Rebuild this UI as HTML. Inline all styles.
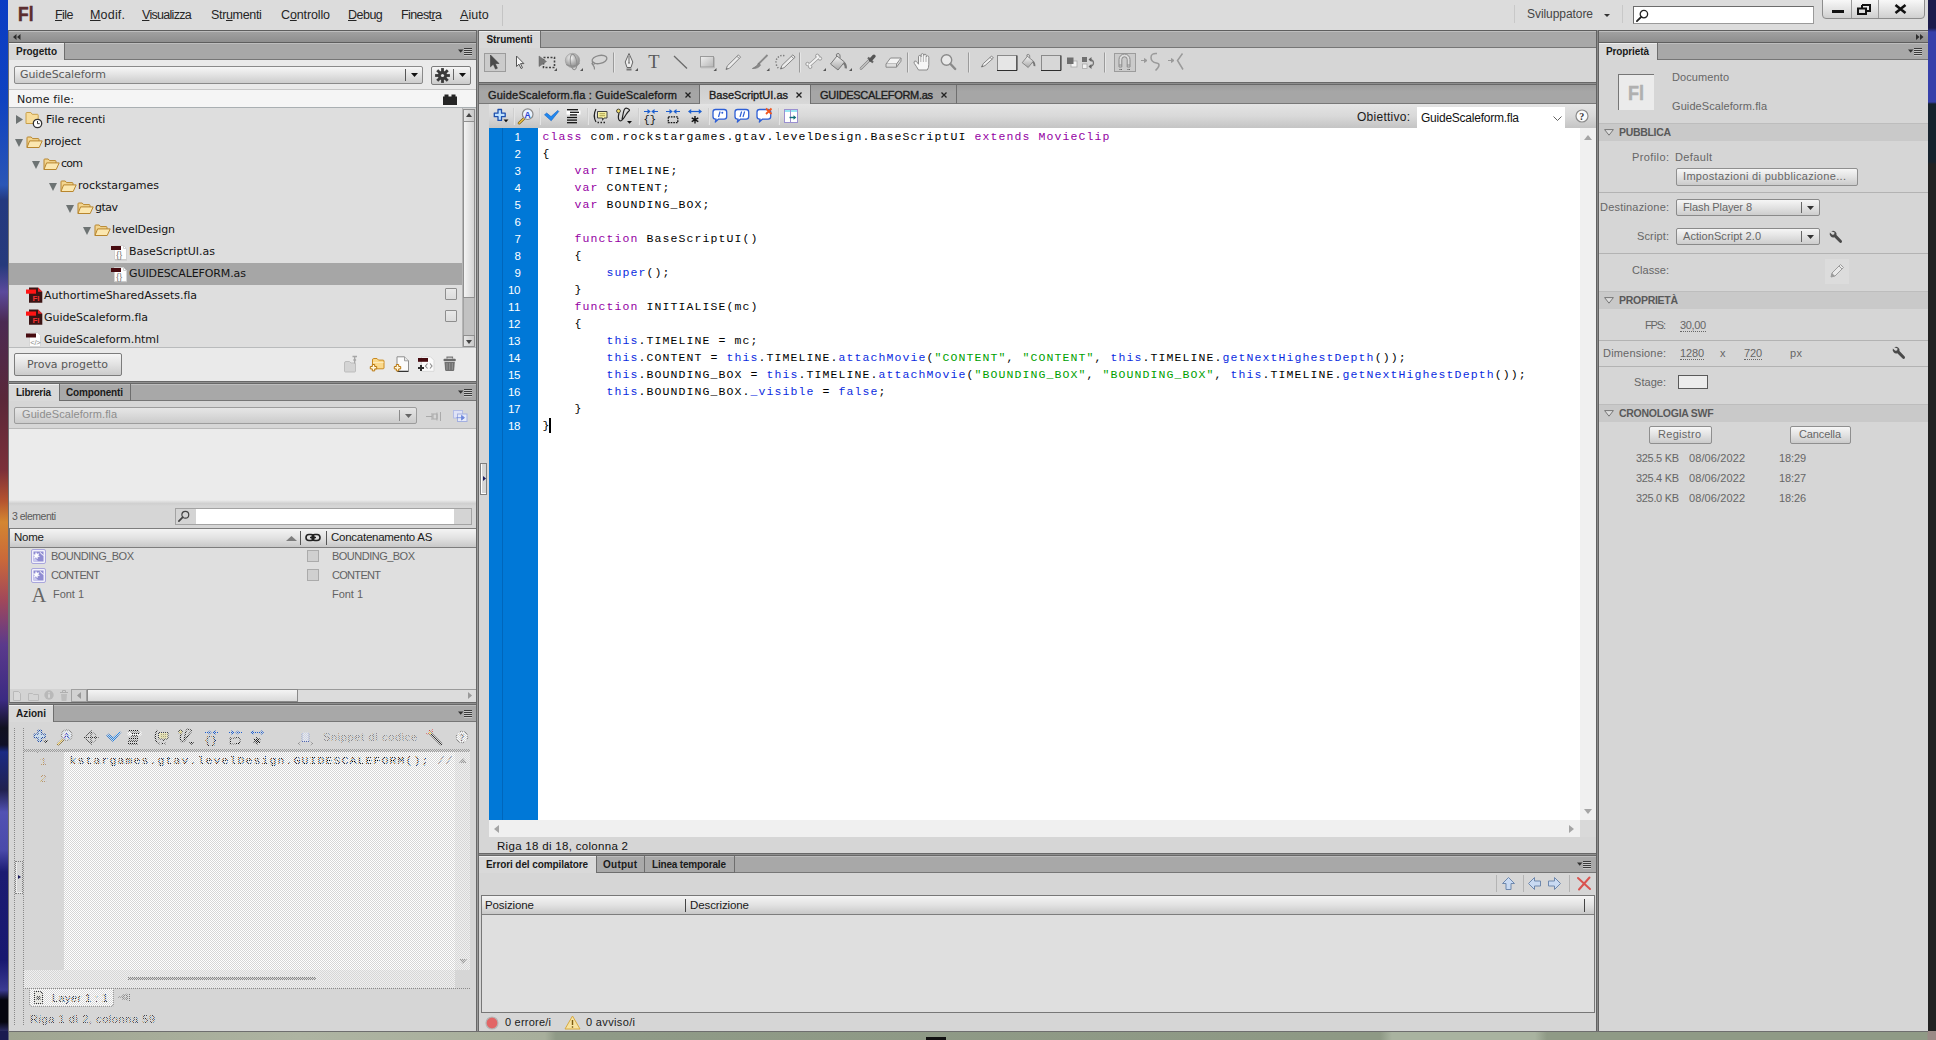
<!DOCTYPE html>
<html lang="it"><head><meta charset="utf-8"><title>Flash</title>
<style>
*{box-sizing:border-box;margin:0;padding:0}
html,body{width:1936px;height:1040px;overflow:hidden}
body{position:relative;background:#d6d6d6;font-family:"Liberation Sans",sans-serif;font-size:11px;color:#1e1e1e;line-height:1}
#root,#root *{position:absolute}
#root{left:0;top:0;width:1936px;height:1040px;overflow:hidden}
#root u{position:static;text-decoration:underline;text-underline-offset:1px}
#root span{position:static}
.tabbar{background:#a8a8a8;border-bottom:1px solid #767676;box-shadow:inset 0 1px 0 #bdbdbd}
.tab{background:#d9d9d9;border-right:1px solid #6e6e6e;box-shadow:inset 0 1px 0 #efefef}
.tabi{background:#a9a9a9;border-right:1px solid #6e6e6e;border-bottom:1px solid #6e6e6e;box-shadow:inset 0 1px 0 #bdbdbd}
.cbar{background:linear-gradient(#a2a2a2,#8e8e8e);border-top:1px solid #5e5e5e;border-bottom:1px solid #5e5e5e;box-shadow:inset 0 1px 0 #bdbdbd}
.btn{background:linear-gradient(#f6f6f6,#e2e2e2 50%,#cbcbcb);border:1px solid #7c7c7c;border-radius:2px}
.combo{background:linear-gradient(#f6f6f6 0,#e4e4e4 45%,#cdcdcd 100%);border:1px solid #8a8a8a;border-radius:2px}
.hd{background:linear-gradient(#f4f4f4,#e2e2e2 50%,#c8c8c8);border-top:1px solid #7d7d7d;border-bottom:1px solid #7d7d7d}
.sep{background:linear-gradient(#686868 0,#686868 1px,#8e8e8e 1px,#8e8e8e 2px,#686868 2px,#686868 3px)}
.sec{background:#c9c9c9}
svg{overflow:visible}
</style></head><body><div id="root">
<div id="wl" style="left:0;top:0;width:8px;height:1040px;background:linear-gradient(#0a3cc4 0,#0f42c0 100px,#2a56b6 185px,#24397f 200px,#263a7c 265px,#5b4a9c 292px,#4b2a52 322px,#5a2839 400px,#7b3039 470px,#b35230 500px,#d48631 522px,#c9683a 560px,#a1485a 600px,#5b3a8c 645px,#3b2a82 700px,#11111f 728px,#0f1028 745px,#1a2a84 752px,#21214f 790px,#5252b3 812px,#4a4aaa 850px,#1b1b72 872px,#181870 960px,#3b3b92 990px,#05050f 1000px,#05050f 1022px,#2b2b62 1031px)"></div>
<div id="wr" style="left:1928px;top:0;width:8px;height:1040px;background:linear-gradient(#1b1b4c 0,#1b1b4c 28px,#3640aa 32px,#3640aa 102px,#16222d 104px,#16222d 162px,#222 164px,#222 100%)"></div>
<div id="wb" style="left:0;top:1031px;width:1936px;height:9px;background:linear-gradient(90deg,#1a1a50 0,#1a1a50 8px,#9fa591 9px,#aeb4a2 300px,#a8af9c 545px,#8f9a87 556px,#8e9985 1380px,#a9b3a0 1392px,#a9b3a0 1535px,#8f9a86 1547px,#8f9a86 1927px,#9a8a86 1928px)"><div style="left:8px;top:0;width:1920px;height:1px;background:#6e6e6e"></div><div style="left:926px;top:6px;width:20px;height:3px;background:#111"></div></div>
<div style="left:8px;top:0px;width:1920px;height:30px;background:#dcdcdc"></div><div style="left:8px;top:30px;width:1px;height:1001px;background:#707070"></div><div style="left:17.50px;top:5.90px;font-size:20.5px;line-height:16px;height:16px;white-space:pre;color:#5b2d2f;transform:scaleX(0.8508);transform-origin:0 0;font-weight:bold;-webkit-text-stroke:.5px #5b2d2f;">Fl</div><div style="left:55.00px;top:6.67px;font-size:12.5px;line-height:16px;height:16px;white-space:pre;color:#252525;letter-spacing:-0.581px;"><u>F</u>ile</div><div style="left:90.00px;top:6.67px;font-size:12.5px;line-height:16px;height:16px;white-space:pre;color:#252525;letter-spacing:0.192px;"><u>M</u>odif.</div><div style="left:142.00px;top:6.67px;font-size:12.5px;line-height:16px;height:16px;white-space:pre;color:#252525;letter-spacing:-0.705px;"><u>V</u>isualizza</div><div style="left:211.00px;top:6.67px;font-size:12.5px;line-height:16px;height:16px;white-space:pre;color:#252525;letter-spacing:-0.336px;">Str<u>u</u>menti</div><div style="left:281.00px;top:6.67px;font-size:12.5px;line-height:16px;height:16px;white-space:pre;color:#252525;letter-spacing:-0.128px;">C<u>o</u>ntrollo</div><div style="left:348.00px;top:6.67px;font-size:12.5px;line-height:16px;height:16px;white-space:pre;color:#252525;letter-spacing:-0.509px;"><u>D</u>ebug</div><div style="left:401.00px;top:6.67px;font-size:12.5px;line-height:16px;height:16px;white-space:pre;color:#252525;letter-spacing:-0.593px;">Finest<u>r</u>a</div><div style="left:460.00px;top:6.67px;font-size:12.5px;line-height:16px;height:16px;white-space:pre;color:#252525;letter-spacing:0.027px;"><u>A</u>iuto</div><div style="left:502px;top:5px;width:1px;height:21px;background:#c4c4c4"></div><div style="left:1514px;top:5px;width:1px;height:18px;background:#c8c8c8"></div><div style="left:1527.00px;top:5.84px;font-size:12px;line-height:16px;height:16px;white-space:pre;color:#454545;letter-spacing:-0.064px;">Sviluppatore</div><svg style="left:1603.5px;top:14px" width="6" height="3" viewBox="0 0 6 3"><path d="M0 0H6L3 3Z" fill="#333"/></svg><div style="left:1622px;top:5px;width:1px;height:18px;background:#c8c8c8"></div><div style="left:1633px;top:6px;width:181px;height:18px;background:#fff;border:1px solid #6c6c6c;border-bottom-color:#9a9a9a;border-right-color:#9a9a9a"></div><svg style="left:1636px;top:9px" width="13.02" height="13.02" viewBox="0 0 14 14"><circle cx="8.5" cy="5.5" r="4" fill="none" stroke="#222" stroke-width="1.4"/><path d="M5.6 8.4L1 13" stroke="#222" stroke-width="2" stroke-linecap="round"/></svg><div style="left:1822px;top:-2px;width:103px;height:21px;background:linear-gradient(#fafafa,#e3e3e3 55%,#cfcfcf);border:1px solid #8c8c8c;border-radius:0 0 4px 4px"></div><div style="left:1851px;top:0px;width:1px;height:18px;background:#9a9a9a"></div><div style="left:1878px;top:0px;width:1px;height:18px;background:#9a9a9a"></div><div style="left:1832px;top:10px;width:12px;height:3px;background:#111"></div><svg style="left:1857px;top:4px" width="14" height="11" viewBox="0 0 14 11"><path d="M5 1h8v6h-3M5 1v3" fill="none" stroke="#111" stroke-width="2"/><rect x="1" y="4.5" width="8" height="5.5" fill="none" stroke="#111" stroke-width="2"/></svg><svg style="left:1894px;top:4px" width="13" height="10" viewBox="0 0 13 10"><path d="M1.5 1L11.5 9M11.5 1L1.5 9" stroke="#111" stroke-width="2.6"/></svg><div class="cbar" style="left:9px;top:30px;width:467px;height:13px;"></div><svg style="left:13px;top:34px" width="8" height="6" viewBox="0 0 8 6"><path d="M3.5 0v6L0 3zM7.5 0v6L4 3z" fill="#2e2e2e"/></svg><div class="tabbar" style="left:9px;top:43px;width:467px;height:17px;"></div><div class="tab" style="left:9px;top:43px;width:56px;height:17px;"></div><div style="left:16.00px;top:43.53px;font-size:10px;line-height:16px;height:16px;white-space:pre;color:#1a1a1a;letter-spacing:-0.015px;font-weight:bold;">Progetto</div><svg style="left:458px;top:48px" width="14" height="9" viewBox="0 0 14 9"><path d="M0 1.500h5.400l-2.700 3.200z" fill="#333"/><path d="M6 1.500h8M6 3.500h8M6 5.500h8M6 7.500h8" stroke="#e2e2e2" stroke-width="1" opacity=".55"/><path d="M6 .5h8M6 2.500h8M6 4.500h8M6 6.500h8" stroke="#3a3a3a" stroke-width="1"/></svg><div style="left:9px;top:60px;width:467px;height:321px;background:#eaeaea"></div><div class="combo" style="left:14px;top:66px;width:409px;height:18px;"></div><div style="left:20.00px;top:67.19px;font-size:11px;line-height:16px;height:16px;white-space:pre;color:#5a5a5a;letter-spacing:-0.119px;font-family:'DejaVu Sans',sans-serif;">GuideScaleform</div><div style="left:405px;top:69px;width:1px;height:12px;background:#555"></div><svg style="left:411px;top:73px" width="7" height="4" viewBox="0 0 7 4"><path d="M0 0H7L3.5 4Z" fill="#111"/></svg><div class="btn" style="left:431px;top:66px;width:40px;height:19px;"></div><svg style="left:435px;top:68px" width="15" height="15" viewBox="0 0 15 15"><g transform="translate(7.5 7.5)"><g fill="#3a3a3a"><rect x="-1.4" y="-7.4" width="2.8" height="4" transform="rotate(0)"/><rect x="-1.4" y="-7.4" width="2.8" height="4" transform="rotate(45)"/><rect x="-1.4" y="-7.4" width="2.8" height="4" transform="rotate(90)"/><rect x="-1.4" y="-7.4" width="2.8" height="4" transform="rotate(135)"/><rect x="-1.4" y="-7.4" width="2.8" height="4" transform="rotate(180)"/><rect x="-1.4" y="-7.4" width="2.8" height="4" transform="rotate(225)"/><rect x="-1.4" y="-7.4" width="2.8" height="4" transform="rotate(270)"/><rect x="-1.4" y="-7.4" width="2.8" height="4" transform="rotate(315)"/></g><circle r="4.6" fill="#3a3a3a"/><circle r="1.6" fill="#e4e4e4"/></g></svg><div style="left:453px;top:69px;width:1px;height:11px;background:#666"></div><svg style="left:458.5px;top:73px" width="7" height="4" viewBox="0 0 7 4"><path d="M0 0H7L3.5 4Z" fill="#111"/></svg><div style="left:9px;top:89px;width:467px;height:1px;background:#c6c6c6"></div><div style="left:9px;top:90px;width:467px;height:17px;background:#f5f5f5"></div><div style="left:17.00px;top:92.19px;font-size:11px;line-height:16px;height:16px;white-space:pre;color:#1a1a1a;letter-spacing:0.067px;font-family:'DejaVu Sans',sans-serif;">Nome file:</div><svg style="left:443px;top:94px" width="14" height="11" viewBox="0 0 14 11"><path d="M0 2.5h1.5V.5h4v2h3v-2h4v2H14V11H0z" fill="#262626"/></svg><div style="left:9px;top:107px;width:467px;height:1px;background:#a9afb2"></div><div style="left:9px;top:108px;width:467px;height:239px;background:#dedede"></div><div style="left:9px;top:263px;width:453px;height:22px;background:#a6a6a6"></div><div style="left:46.00px;top:112.19px;font-size:11px;line-height:16px;height:16px;white-space:pre;color:#141414;letter-spacing:-0.064px;font-family:'DejaVu Sans',sans-serif;">File recenti</div><div style="left:44.00px;top:134.19px;font-size:11px;line-height:16px;height:16px;white-space:pre;color:#141414;letter-spacing:-0.196px;font-family:'DejaVu Sans',sans-serif;">project</div><div style="left:61.00px;top:156.19px;font-size:11px;line-height:16px;height:16px;white-space:pre;color:#141414;letter-spacing:-0.747px;font-family:'DejaVu Sans',sans-serif;">com</div><div style="left:78.00px;top:178.19px;font-size:11px;line-height:16px;height:16px;white-space:pre;color:#141414;letter-spacing:-0.040px;font-family:'DejaVu Sans',sans-serif;">rockstargames</div><div style="left:95.00px;top:200.19px;font-size:11px;line-height:16px;height:16px;white-space:pre;color:#141414;letter-spacing:-0.515px;font-family:'DejaVu Sans',sans-serif;">gtav</div><div style="left:112.00px;top:222.19px;font-size:11px;line-height:16px;height:16px;white-space:pre;color:#141414;letter-spacing:-0.114px;font-family:'DejaVu Sans',sans-serif;">levelDesign</div><div style="left:129.00px;top:244.19px;font-size:11px;line-height:16px;height:16px;white-space:pre;color:#141414;letter-spacing:0.003px;font-family:'DejaVu Sans',sans-serif;">BaseScriptUI.as</div><div style="left:129.00px;top:266.19px;font-size:11px;line-height:16px;height:16px;white-space:pre;color:#141414;letter-spacing:-0.100px;font-family:'DejaVu Sans',sans-serif;">GUIDESCALEFORM.as</div><div style="left:44.00px;top:288.19px;font-size:11px;line-height:16px;height:16px;white-space:pre;color:#141414;letter-spacing:-0.023px;font-family:'DejaVu Sans',sans-serif;">AuthortimeSharedAssets.fla</div><div style="left:44.00px;top:310.19px;font-size:11px;line-height:16px;height:16px;white-space:pre;color:#141414;letter-spacing:-0.042px;font-family:'DejaVu Sans',sans-serif;">GuideScaleform.fla</div><div style="left:44.00px;top:332.19px;font-size:11px;line-height:16px;height:16px;white-space:pre;color:#141414;letter-spacing:-0.061px;font-family:'DejaVu Sans',sans-serif;">GuideScaleform.html</div><svg style="left:15.5px;top:115px" width="7" height="9" viewBox="0 0 7 9"><path d="M0 0V9L7 4.5Z" fill="#6d7373"/></svg><svg style="left:15px;top:139px" width="8" height="8" viewBox="0 0 8 8"><path d="M0 0H8L4 8Z" fill="#6d7373"/></svg><svg style="left:25.5px;top:134.8px" width="16" height="13" viewBox="0 0 16 13"><path d="M1 12.5V2.8q0-.8.8-.8h3.4l1.4 1.6h5.6q.8 0 .8.8v1.5" fill="#f3d590" stroke="#b8862e" stroke-width="1"/><path d="M1 12.5l2.6-6.6h12.6l-3 6.6z" fill="#fbe7b0" stroke="#b8862e" stroke-width="1" stroke-linejoin="round"/></svg><svg style="left:32px;top:161px" width="8" height="8" viewBox="0 0 8 8"><path d="M0 0H8L4 8Z" fill="#6d7373"/></svg><svg style="left:42.5px;top:156.8px" width="16" height="13" viewBox="0 0 16 13"><path d="M1 12.5V2.8q0-.8.8-.8h3.4l1.4 1.6h5.6q.8 0 .8.8v1.5" fill="#f3d590" stroke="#b8862e" stroke-width="1"/><path d="M1 12.5l2.6-6.6h12.6l-3 6.6z" fill="#fbe7b0" stroke="#b8862e" stroke-width="1" stroke-linejoin="round"/></svg><svg style="left:49px;top:183px" width="8" height="8" viewBox="0 0 8 8"><path d="M0 0H8L4 8Z" fill="#6d7373"/></svg><svg style="left:59.5px;top:178.8px" width="16" height="13" viewBox="0 0 16 13"><path d="M1 12.5V2.8q0-.8.8-.8h3.4l1.4 1.6h5.6q.8 0 .8.8v1.5" fill="#f3d590" stroke="#b8862e" stroke-width="1"/><path d="M1 12.5l2.6-6.6h12.6l-3 6.6z" fill="#fbe7b0" stroke="#b8862e" stroke-width="1" stroke-linejoin="round"/></svg><svg style="left:66px;top:205px" width="8" height="8" viewBox="0 0 8 8"><path d="M0 0H8L4 8Z" fill="#6d7373"/></svg><svg style="left:76.5px;top:200.8px" width="16" height="13" viewBox="0 0 16 13"><path d="M1 12.5V2.8q0-.8.8-.8h3.4l1.4 1.6h5.6q.8 0 .8.8v1.5" fill="#f3d590" stroke="#b8862e" stroke-width="1"/><path d="M1 12.5l2.6-6.6h12.6l-3 6.6z" fill="#fbe7b0" stroke="#b8862e" stroke-width="1" stroke-linejoin="round"/></svg><svg style="left:83px;top:227px" width="8" height="8" viewBox="0 0 8 8"><path d="M0 0H8L4 8Z" fill="#6d7373"/></svg><svg style="left:93.5px;top:222.8px" width="16" height="13" viewBox="0 0 16 13"><path d="M1 12.5V2.8q0-.8.8-.8h3.4l1.4 1.6h5.6q.8 0 .8.8v1.5" fill="#f3d590" stroke="#b8862e" stroke-width="1"/><path d="M1 12.5l2.6-6.6h12.6l-3 6.6z" fill="#fbe7b0" stroke="#b8862e" stroke-width="1" stroke-linejoin="round"/></svg><svg style="left:25px;top:110.7px" width="18" height="18" viewBox="0 0 18 18"><path d="M1 12.5V2.3q0-.8.8-.8h4l1.4 1.8h5.2q.8 0 .8.8v8.4z" fill="#f7dc9a" stroke="#c9a04a" stroke-width="1"/><circle cx="12.5" cy="12.5" r="4.2" fill="#fff" stroke="#333" stroke-width="1.3"/><path d="M12.5 10v2.7h2.2" stroke="#333" stroke-width="1" fill="none"/></svg><svg style="left:111px;top:243px" width="16" height="17" viewBox="0 0 16 17"><path d="M3.500 2.500h9l3 3v11h-12z" fill="#fdfdfd" stroke="#d2d2d2" stroke-width="1"/><path d="M12.500 2.500v3h3" fill="none" stroke="#d2d2d2"/><rect x="0" y="3" width="10" height="4" fill="#470b10"/><text x="5.200" y="14.600" font-size="8.500" font-family="Liberation Sans,sans-serif" fill="#6a6a6a" style="position:static;letter-spacing:.3px">{}</text><path d="M4 17h12" stroke="#bdbdbd" stroke-width=".8"/></svg><svg style="left:111px;top:265px" width="16" height="17" viewBox="0 0 16 17"><path d="M3.500 2.500h9l3 3v11h-12z" fill="#fdfdfd" stroke="#d2d2d2" stroke-width="1"/><path d="M12.500 2.500v3h3" fill="none" stroke="#d2d2d2"/><rect x="0" y="3" width="10" height="4" fill="#470b10"/><text x="5.200" y="14.600" font-size="8.500" font-family="Liberation Sans,sans-serif" fill="#6a6a6a" style="position:static;letter-spacing:.3px">{}</text><path d="M4 17h12" stroke="#bdbdbd" stroke-width=".8"/></svg><svg style="left:26px;top:287px" width="17" height="16" viewBox="0 0 17 16"><path d="M3 .5h9l4.300 4.300v11h-13.300z" fill="#3a1414"/><path d="M12 .5l4.300 4.300h-4.300z" fill="#e8262a"/><rect x="0" y="2.500" width="10" height="4.200" fill="#ff1414"/><text x="6.500" y="13.800" font-size="8" font-weight="bold" font-family="Liberation Sans,sans-serif" fill="#f03030" style="position:static;letter-spacing:-.2px">Fl</text></svg><svg style="left:26px;top:309px" width="17" height="16" viewBox="0 0 17 16"><path d="M3 .5h9l4.300 4.300v11h-13.300z" fill="#3a1414"/><path d="M12 .5l4.300 4.300h-4.300z" fill="#e8262a"/><rect x="0" y="2.500" width="10" height="4.200" fill="#ff1414"/><text x="6.500" y="13.800" font-size="8" font-weight="bold" font-family="Liberation Sans,sans-serif" fill="#f03030" style="position:static;letter-spacing:-.2px">Fl</text></svg><svg style="left:26px;top:332px" width="16" height="15" viewBox="0 0 16 15"><path d="M3.500 .5h8l3 3v11h-11z" fill="#fdfdfd" stroke="#d6d6d6" stroke-width="1"/><rect x="0" y="1.500" width="10" height="4" fill="#470b10"/><text x="4.300" y="13" font-size="7.500" font-family="Liberation Sans,sans-serif" fill="#8a8a8a" style="position:static;letter-spacing:-.3px">&lt;/&gt;</text></svg><div style="left:445px;top:288px;width:12px;height:12px;background:linear-gradient(#e9e9e9,#dcdcdc);border:1px solid #8e8e8e;border-radius:1px"></div><div style="left:445px;top:310px;width:12px;height:12px;background:linear-gradient(#e9e9e9,#dcdcdc);border:1px solid #8e8e8e;border-radius:1px"></div><div style="left:462px;top:108px;width:14px;height:239px;background:#d2d2d2;border-left:1px solid #b5b5b5"></div><div style="left:463px;top:109px;width:12px;height:13px;background:linear-gradient(90deg,#e6e6e6,#c9c9c9);border:1px solid #8f8f8f"></div><svg style="left:466px;top:113px" width="6" height="4" viewBox="0 0 6 4"><path d="M0 4H6L3 0Z" fill="#444"/></svg><div style="left:463px;top:121px;width:12px;height:177px;background:linear-gradient(90deg,#f3f3f3,#d4d4d4);border:1px solid #8f8f8f"></div><div style="left:463px;top:298px;width:12px;height:37px;background:#c2c2c2;border:1px solid #a2a2a2;border-width:0 1px"></div><div style="left:463px;top:335px;width:12px;height:12px;background:linear-gradient(90deg,#e6e6e6,#c9c9c9);border:1px solid #8f8f8f"></div><svg style="left:466px;top:339.5px" width="6" height="4" viewBox="0 0 6 4"><path d="M0 0H6L3 4Z" fill="#444"/></svg><div style="left:9px;top:347px;width:467px;height:1px;background:#b9bbbc"></div><div class="btn" style="left:14px;top:353px;width:108px;height:23px;"></div><div style="left:27.00px;top:357.19px;font-size:11px;line-height:16px;height:16px;white-space:pre;color:#585858;letter-spacing:-0.023px;font-family:'DejaVu Sans',sans-serif;">Prova progetto</div><svg style="left:340px;top:352px" width="120" height="24" viewBox="340 352 120 24"><path d="M344.500 371v-8q0-1.500 1.500-1.500h3.500l1.500 1.500h3.500q1 0 1 1v7q0 1-1 1h-9q-1 0-1-1z" fill="#d4d4d4" stroke="#bdbdbd"/><path d="M352.500 356.500h4.500M354.700 357v6.500M353.300 360h2.800" stroke="#a6a6a6" stroke-width="1.300"/><path d="M372.500 368v-8q0-1.500 1.200-1.500h3.300l1.500 1.600h4.500q1 0 1 1v6.900q0 .8-1 .8h-9.500q-1 0-1-.8z" fill="#fbd98b" stroke="#c98a22" stroke-width="1"/><path d="M373 362.500h10.500" stroke="#fdeabb" stroke-width="1"/><path d="M370.3 366.5h2v-2h2.400v2h2v2.400h-2v2h-2.400v-2h-2z" fill="#fff7dd" stroke="#b9770e" stroke-width="1" stroke-linejoin="round"/><path d="M397 356.800h7.500l4 4v10.200h-11.500z" fill="#fbfbfb" stroke="#8e8e8e" stroke-width="1"/><path d="M404.500 356.800v4h4" fill="#e6e6e6" stroke="#8e8e8e" stroke-width=".8"/><path d="M397.500 371.500h11" stroke="#333" stroke-width="1"/><path d="M394.3 366.5h2v-2h2.400v2h2v2.400h-2v2h-2.400v-2h-2z" fill="#fff7dd" stroke="#b9770e" stroke-width="1" stroke-linejoin="round"/><path d="M421.500 356.800h9l3.500 3.500v11h-12.500z" fill="#fbfbfb" stroke="#d9d9d9" stroke-width="1"/><rect x="418" y="358" width="10" height="3.800" fill="#470b10"/><path d="M427.500 363.500l-2 2.500 2 2.500M430 363.500l2 2.500-2 2.500" fill="none" stroke="#8a8a8a" stroke-width="1.100"/><path d="M418 368h6M421 365v6" stroke="#2e2e2e" stroke-width="2"/><path d="M447 358.500v-1.300h5.500v1.300" fill="none" stroke="#777" stroke-width="1.200"/><rect x="443.500" y="358.800" width="12.300" height="2.400" rx="1" fill="#6a6a6a"/><path d="M444.500 362h10.300l-.6 8q-.1 1-1 1h-7q-1 0-1.100-1z" fill="#707070"/><path d="M447 363v6.800M449.700 363v6.800M452.300 363v6.800" stroke="#9c9c9c" stroke-width=".9"/></svg><div class="sep" style="left:9px;top:381px;width:467px;height:3px;"></div><div class="tabbar" style="left:9px;top:384px;width:467px;height:17px;"></div><div class="tab" style="left:9px;top:384px;width:51px;height:17px;"></div><div class="tabi" style="left:60px;top:384px;width:71px;height:17px;"></div><div style="left:16.00px;top:384.54px;font-size:10px;line-height:16px;height:16px;white-space:pre;color:#1a1a1a;letter-spacing:-0.240px;font-weight:bold;">Libreria</div><div style="left:66.00px;top:384.54px;font-size:10px;line-height:16px;height:16px;white-space:pre;color:#1a1a1a;letter-spacing:-0.147px;font-weight:bold;">Componenti</div><svg style="left:458px;top:389px" width="14" height="9" viewBox="0 0 14 9"><path d="M0 1.500h5.400l-2.700 3.200z" fill="#333"/><path d="M6 1.500h8M6 3.500h8M6 5.500h8M6 7.500h8" stroke="#e2e2e2" stroke-width="1" opacity=".55"/><path d="M6 .5h8M6 2.500h8M6 4.500h8M6 6.500h8" stroke="#3a3a3a" stroke-width="1"/></svg><div class="combo" style="left:14px;top:407px;width:403px;height:17px;background:linear-gradient(#e6e6e6,#d9d9d9 50%,#cbcbcb);border-color:#9c9c9c"></div><div style="left:22.00px;top:406.19px;font-size:11px;line-height:16px;height:16px;white-space:pre;color:#8d8d8d;letter-spacing:0.086px;">GuideScaleform.fla</div><div style="left:399px;top:410px;width:1px;height:11px;background:#8a8a8a"></div><svg style="left:404.5px;top:414px" width="7" height="4" viewBox="0 0 7 4"><path d="M0 0H7L3.5 4Z" fill="#666"/></svg><svg style="left:426px;top:410px" width="16" height="13" viewBox="0 0 16 13"><path d="M0 6.500h6M6 3v7M7 4h4v5h-4zM11 2.500v8M14.500 2v9" fill="none" stroke="#aaa" stroke-width="1"/></svg><svg style="left:452px;top:409px" width="16" height="14" viewBox="0 0 16 14"><rect x="1.500" y="1.500" width="9" height="7.500" fill="#dfe3f6" stroke="#b3bce6"/><rect x="5.500" y="5" width="9.500" height="7.500" fill="#e6eaf8" stroke="#a3afe0"/><path d="M4.500 8.700h6M9.500 6.300l3 2.400-3 2.400z" fill="#6d86dc" stroke="#6d86dc" stroke-width=".8"/></svg><div style="left:9px;top:428px;width:467px;height:1px;background:#b9b9b9"></div><div style="left:9px;top:429px;width:467px;height:72px;background:#ebebeb"></div><div style="left:9px;top:500px;width:467px;height:6px;background:linear-gradient(#ebebeb,#cfcfcf 60%,#d6d6d6)"></div><div style="left:12.00px;top:508.36px;font-size:10.5px;line-height:16px;height:16px;white-space:pre;color:#5a5a5a;letter-spacing:-0.494px;">3 elementi</div><div style="left:175px;top:508px;width:297px;height:17px;background:#d4d4d4;border:1px solid #a3a3a3"></div><div style="left:196px;top:509px;width:258px;height:15px;background:#fff"></div><svg style="left:178px;top:510px" width="12.04" height="12.04" viewBox="0 0 14 14"><circle cx="8.5" cy="5.5" r="4" fill="none" stroke="#444" stroke-width="1.4"/><path d="M5.6 8.4L1 13" stroke="#444" stroke-width="2" stroke-linecap="round"/></svg><div class="hd" style="left:9px;top:528px;width:467px;height:20px;"></div><div style="left:14.00px;top:529.02px;font-size:11.5px;line-height:16px;height:16px;white-space:pre;color:#1a1a1a;letter-spacing:-0.225px;">Nome</div><svg style="left:285.5px;top:536px" width="11" height="5" viewBox="0 0 11 5"><path d="M0 5H11L5.5 0Z" fill="#7e7e7e"/></svg><div style="left:300px;top:531px;width:1px;height:14px;background:#555"></div><svg style="left:305px;top:533px" width="16" height="9" viewBox="0 0 16 9"><rect x="1" y="1.500" width="8" height="6" rx="3" fill="none" stroke="#222" stroke-width="1.600"/><rect x="7" y="1.500" width="8" height="6" rx="3" fill="none" stroke="#222" stroke-width="1.600"/><path d="M5 4.500h6" stroke="#222" stroke-width="1.400"/></svg><div style="left:326px;top:531px;width:1px;height:14px;background:#555"></div><div style="left:331.00px;top:529.02px;font-size:11.5px;line-height:16px;height:16px;white-space:pre;color:#1a1a1a;letter-spacing:-0.258px;">Concatenamento AS</div><div style="left:9px;top:548px;width:467px;height:141px;background:#dfdfdf"></div><svg style="left:31px;top:549px" width="15" height="15" viewBox="0 0 15 15"><rect x=".5" y=".5" width="14" height="14" rx="1.500" fill="#f1f0fb" stroke="#a9a6dc"/><rect x="2.500" y="2.500" width="10" height="10" fill="#8f8cd2"/><path d="M2.500 12.500v-5l5 5z" fill="#c9c7ee"/><path d="M5 3.500l1 1.800 2-.6-1.200 1.600 1.600 1.200-2 .2-.2 2-1.200-1.600-1.800.8.800-1.800-1.600-1.200 2-.2zM9 3c1 2 2 3 4 3.500" fill="#fff" stroke="#fff" stroke-width=".6"/></svg><div style="left:51.00px;top:548.19px;font-size:11px;line-height:16px;height:16px;white-space:pre;color:#626262;letter-spacing:-0.512px;">BOUNDING_BOX</div><div style="left:307px;top:550px;width:12px;height:12px;background:#d0d0d0;border:1px solid #ababab"></div><div style="left:332.00px;top:548.19px;font-size:11px;line-height:16px;height:16px;white-space:pre;color:#626262;letter-spacing:-0.512px;">BOUNDING_BOX</div><svg style="left:31px;top:568px" width="15" height="15" viewBox="0 0 15 15"><rect x=".5" y=".5" width="14" height="14" rx="1.500" fill="#f1f0fb" stroke="#a9a6dc"/><rect x="2.500" y="2.500" width="10" height="10" fill="#8f8cd2"/><path d="M2.500 12.500v-5l5 5z" fill="#c9c7ee"/><path d="M5 3.500l1 1.800 2-.6-1.200 1.600 1.600 1.200-2 .2-.2 2-1.200-1.600-1.800.8.800-1.800-1.600-1.200 2-.2zM9 3c1 2 2 3 4 3.500" fill="#fff" stroke="#fff" stroke-width=".6"/></svg><div style="left:51.00px;top:567.19px;font-size:11px;line-height:16px;height:16px;white-space:pre;color:#626262;letter-spacing:-0.694px;">CONTENT</div><div style="left:307px;top:569px;width:12px;height:12px;background:#d0d0d0;border:1px solid #ababab"></div><div style="left:332.00px;top:567.19px;font-size:11px;line-height:16px;height:16px;white-space:pre;color:#626262;letter-spacing:-0.694px;">CONTENT</div><div style="left:31.50px;top:586.58px;font-size:20.5px;line-height:16px;height:16px;white-space:pre;color:#666;font-family:'Liberation Serif',serif;">A</div><div style="left:53.00px;top:586.19px;font-size:11px;line-height:16px;height:16px;white-space:pre;color:#626262;letter-spacing:-0.037px;">Font 1</div><div style="left:332.00px;top:586.19px;font-size:11px;line-height:16px;height:16px;white-space:pre;color:#626262;letter-spacing:-0.037px;">Font 1</div><div style="left:9px;top:689px;width:467px;height:13px;background:#d3d3d3"></div><div style="left:9px;top:528px;width:1px;height:174px;background:#727272"></div><div style="left:71px;top:689px;width:405px;height:13px;background:#dcdcdc;border-top:1px solid #9a9a9a"></div><div style="left:71px;top:689px;width:16px;height:13px;background:#d2d2d2;border:1px solid #a0a0a0"></div><svg style="left:76.5px;top:692px" width="4" height="7" viewBox="0 0 4 7"><path d="M4 0V7L0 3.5Z" fill="#999"/></svg><div style="left:87px;top:689px;width:211px;height:13px;background:linear-gradient(#f4f4f4,#dadada);border:1px solid #8a8a8a"></div><svg style="left:468px;top:692px" width="4" height="7" viewBox="0 0 4 7"><path d="M0 0V7L4 3.5Z" fill="#999"/></svg><svg style="left:13px;top:691px" width="8" height="10" viewBox="0 0 8 10"><path d="M.5 .5h5l2 2v7h-7z" fill="#d9d9d9" stroke="#b9b9b9"/></svg><svg style="left:28px;top:692px" width="11" height="9" viewBox="0 0 11 9"><path d="M.5 1.500h4l1 1h5v6h-10z" fill="#d4d4d4" stroke="#bababa"/></svg><svg style="left:44px;top:690px" width="10" height="10" viewBox="0 0 10 10"><circle cx="5" cy="5" r="4.700" fill="#b9b9b9"/><path d="M5 4.200v3.500M5 2.300v1" stroke="#e6e6e6" stroke-width="1.300"/></svg><svg style="left:60px;top:690px" width="8" height="11" viewBox="0 0 8 11"><path d="M0 2.500h8M2.500 2v-1.500h3v1.500" stroke="#b0b0b0" fill="none"/><path d="M1 4h6l-.6 7h-4.800z" fill="#bdbdbd"/></svg><div class="sep" style="left:9px;top:702px;width:467px;height:3px;"></div><div class="tabbar" style="left:9px;top:705px;width:467px;height:17px;"></div><div class="tab" style="left:9px;top:705px;width:45px;height:17px;"></div><div style="left:16.00px;top:705.53px;font-size:10px;line-height:16px;height:16px;white-space:pre;color:#1a1a1a;letter-spacing:0.001px;font-weight:bold;">Azioni</div><svg style="left:458px;top:710px" width="14" height="9" viewBox="0 0 14 9"><path d="M0 1.500h5.400l-2.700 3.200z" fill="#333"/><path d="M6 1.500h8M6 3.500h8M6 5.500h8M6 7.500h8" stroke="#e2e2e2" stroke-width="1" opacity=".55"/><path d="M6 .5h8M6 2.500h8M6 4.500h8M6 6.500h8" stroke="#3a3a3a" stroke-width="1"/></svg><div style="left:9px;top:722px;width:467px;height:309px;background:#d6d6d6"></div><div style="left:14px;top:728px;width:1px;height:297px;border-left:1px dotted #8a8a8a"></div><div style="left:23px;top:728px;width:1px;height:297px;border-left:1px dotted #8a8a8a"></div><div style="left:15px;top:861px;width:8px;height:33px;background:#d6d6d6;border:1px dotted #808080;box-shadow:inset 1px -1px 0 #ececec"></div><svg style="left:17.5px;top:875px" width="3" height="4" viewBox="0 0 3 4"><path d="M0 0V4L3 2Z" fill="#1a1a5c"/></svg><svg style="left:24px;top:725px" width="446" height="25" viewBox="24 725 446 25"><g transform="translate(-460 621)"><path d="M498 109.500h3.500v3.700h3.700v3.500h-3.700v3.700h-3.500v-3.700h-3.700v-3.500h3.700z" fill="#bfe2ff" stroke="#1e4fae" stroke-width="1.300" stroke-linejoin="round"/><path d="M503.500 119.500h5l-2.500 2.800z" fill="#111"/></g><g transform="translate(-461 621)"><path d="M524 118.500l-5 4.700" stroke="#7a5a10" stroke-width="2.600" stroke-linecap="round"/><path d="M524 118.500l-5 4.700" stroke="#f3c948" stroke-width="1.200" stroke-linecap="round"/><circle cx="527.700" cy="114.200" r="5.300" fill="#eaf3ff" stroke="#8a8a8a" stroke-width="1.200"/><text x="524.600" y="117.600" font-family="Liberation Sans,sans-serif" font-size="8.500" font-weight="bold" fill="#2a3fd0" style="position:static">A</text></g><g fill="none" stroke="#333" stroke-width="1"><circle cx="91" cy="737.500" r="5"/><path d="M91 730v15M83.500 737.500h15"/></g><g transform="translate(-438 621)"><path d="M544.500 114.800l2.200-1.800 4.300 3.600 6.800-6.200 1 1-7.600 9.400z" fill="#1e88f0" stroke="#1760c0" stroke-width=".6" stroke-linejoin="round"/></g><g transform="translate(-439 621)"><rect x="566.500" y="110.500" width="14" height="4" fill="#fff"/><path d="M567 109.7H578" stroke="#111" stroke-width="1.300"/><path d="M570 112.3H579" stroke="#111" stroke-width="1.300"/><path d="M570 114.9H577" stroke="#111" stroke-width="1.300"/><path d="M567 117.5H577" stroke="#111" stroke-width="1.300"/><path d="M567 120.1H577" stroke="#111" stroke-width="1.300"/><path d="M567 122.7H577" stroke="#111" stroke-width="1.300"/></g><g transform="translate(-439 621)"><path d="M596 109q-3.500 6.500 0 13" fill="none" stroke="#222" stroke-width="1.200"/><path d="M597.500 111.500h9.500v6.500h-3l-1.500 2.300v-2.300h-5z" fill="#f7f0a0" stroke="#444" stroke-width="1"/><path d="M599.500 113.700h5.500M599.500 115.700h5.500" stroke="#9a8f3a" stroke-width=".8"/><path d="M597.500 122.500h8" stroke="#222" stroke-width="1.300" stroke-dasharray="1.500 1.500"/></g><g transform="translate(-438 621)"><path d="M619 113q-1.500 6 .5 7.500t5-3.500 4.500-6-1.500-2.500-4 3.500-1.500 7.500" fill="none" stroke="#222" stroke-width="1.200"/><circle cx="618.500" cy="111" r="1.900" fill="#f7e36a" stroke="#333" stroke-width=".9"/><path d="M627 121h5l-2.500 2.800z" fill="#111"/></g><g transform="translate(-439 621)"><path d="M644 111.5H649.5M658 111.5H652.5" stroke="#1c5fd0" stroke-width="1.200"/><path d="M650.7 111.5l-3.200-2.400v4.800zM651.3 111.5l3.200-2.400v4.800z" fill="#1c5fd0"/><text x="643.500" y="123.300" font-family="Liberation Mono,monospace" font-size="10.500" fill="#111" style="position:static;letter-spacing:0px">{}</text></g><g transform="translate(-438 621)"><path d="M666 111.5H671.5M680 111.5H674.5" stroke="#1c5fd0" stroke-width="1.200"/><path d="M672.7 111.5l-3.200-2.400v4.800zM673.3 111.5l3.200-2.400v4.800z" fill="#1c5fd0"/><rect x="668.300" y="116.800" width="9.500" height="5.800" fill="none" stroke="#111" stroke-width="1.300" stroke-dasharray="1.600 1"/></g><g transform="translate(-438 621)"><path d="M690 111.5H700" stroke="#1c5fd0" stroke-width="1.200"/><path d="M688 111.5l3.200-2.400v4.800zM702 111.5l-3.200-2.400v4.800z" fill="#1c5fd0"/><path d="M695 116v7.600M691.700 117.900l6.600 3.800M698.300 117.900l-6.600 3.800" stroke="#111" stroke-width="1.400"/></g><path d="M302 732.500h7v9h-7z" fill="#dfe6fa" stroke="#4a63b8" stroke-dasharray="1 1"/><path d="M300 741l-2 2.500 2 2.500M311 741l2 2.500-2 2.500" fill="none" stroke="#333"/><path d="M430 733l11 11" stroke="#333" stroke-width="2.600" stroke-linecap="round"/><path d="M429 730l1 2.500M426.500 733.500l2.500.5M432.500 729.500l-.5 2.500" stroke="#d33" stroke-width="1.200"/><circle cx="430" cy="733" r="1.300" fill="#f3d23a"/><circle cx="462" cy="737" r="5.800" fill="#fafafa" stroke="#888"/><text x="459.500" y="740.500" font-family="Liberation Serif,serif" font-size="9.500" font-weight="bold" fill="#555" style="position:static">?</text></svg><div style="left:323.00px;top:729.19px;font-size:11px;line-height:16px;height:16px;white-space:pre;color:#7a7a7a;letter-spacing:0.639px;">Snippet di codice</div><div style="left:24px;top:749px;width:446px;height:3px;background:#9c9c9c"></div><div style="left:24px;top:752px;width:40px;height:218px;background:#d6d6d6"></div><div style="left:37px;top:752px;width:1px;height:218px;border-left:1px dotted #9a9a9a"></div><div style="left:64px;top:752px;width:391px;height:218px;background:#fff"></div><div style="left:455px;top:752px;width:15px;height:218px;background:#f0f0f0"></div><div style="left:24px;top:970px;width:431px;height:18px;background:#f0f0f0"></div><div style="left:455px;top:970px;width:15px;height:18px;background:#d6d6d6"></div><div style="left:128px;top:977px;width:188px;height:3px;background:#8a8a8a"></div><div style="left:24px;top:988px;width:446px;height:1px;border-top:1px dotted #8a8a8a"></div><svg style="left:458.5px;top:758px" width="8" height="5" viewBox="0 0 8 5"><path d="M0 5H8L4 0Z" fill="#9a9a9a"/></svg><svg style="left:458.5px;top:959px" width="8" height="5" viewBox="0 0 8 5"><path d="M0 0H8L4 5Z" fill="#9a9a9a"/></svg><div style="left:40.00px;top:753.94px;font-size:11.5px;line-height:16px;height:16px;white-space:pre;color:#b08a58;font-family:'Liberation Mono',monospace;">1</div><div style="left:40.00px;top:770.94px;font-size:11.5px;line-height:16px;height:16px;white-space:pre;color:#b08a58;font-family:'Liberation Mono',monospace;">2</div><div style="left:69.40px;top:752.94px;font-size:11.5px;line-height:16px;height:16px;white-space:pre;color:#000;font-family:'Liberation Mono',monospace;letter-spacing:1.1px;">kstargames.gtav.levelDesign.GUIDESCALEFORM();</div><div style="left:437.40px;top:752.94px;font-size:11.5px;line-height:16px;height:16px;white-space:pre;color:#7a7a7a;font-family:'Liberation Mono',monospace;letter-spacing:1.1px;">//</div><div style="left:29px;top:989px;width:85px;height:18px;background:#fff;border:1px solid #9a9a9a;border-top:none;border-radius:0 0 3px 3px"></div><svg style="left:34px;top:991px" width="9" height="13" viewBox="0 0 9 13"><path d="M.5 .5h6l2 2v10h-8z" fill="#f4f4ea" stroke="#333"/><rect x="2.500" y="5" width="4" height="4" fill="#555"/></svg><div style="left:52.00px;top:990.19px;font-size:11px;line-height:16px;height:16px;white-space:pre;color:#111;letter-spacing:0.402px;">Layer 1 : 1</div><svg style="left:118px;top:992px" width="12" height="10" viewBox="0 0 12 10"><path d="M0 5h5M5 2v6M6 3h3v4h-3zM9 1.500v7M11.500 1v8" fill="none" stroke="#777"/></svg><div style="left:30.00px;top:1011.19px;font-size:11px;line-height:16px;height:16px;white-space:pre;color:#333;letter-spacing:0.567px;">Riga 1 di 2, colonna 59</div><div style="left:24px;top:725px;width:446px;height:305px;background:repeating-conic-gradient(#d6d6d6 0 25%,transparent 0 50%) 0 0/2px 2px"></div><div style="left:476px;top:30px;width:3px;height:1001px;background:linear-gradient(90deg,#686868 0,#686868 1px,#9a9a9a 1px,#9a9a9a 2px,#686868 2px,#686868 3px)"></div><div style="left:1596px;top:30px;width:3px;height:1001px;background:linear-gradient(90deg,#626262 0,#626262 1px,#8a8a8a 1px,#8a8a8a 2px,#626262 2px,#626262 3px)"></div><div style="left:478px;top:30px;width:1119px;height:1px;background:#5e5e5e"></div><div class="tabbar" style="left:479px;top:31px;width:1117px;height:17px;"></div><div class="tab" style="left:479px;top:31px;width:62px;height:17px;"></div><div style="left:486.50px;top:31.54px;font-size:10px;line-height:16px;height:16px;white-space:pre;color:#1a1a1a;letter-spacing:-0.084px;font-weight:bold;">Strumenti</div><div style="left:479px;top:48px;width:1117px;height:34px;background:#d6d6d6"></div><svg style="left:479px;top:48px" width="1117" height="34" viewBox="479 48 1117 34"><defs><radialGradient id="sph" cx=".38" cy=".32" r=".7"><stop offset="0" stop-color="#f4f4f4"/><stop offset=".55" stop-color="#b4b4b4"/><stop offset="1" stop-color="#8a8a8a"/></radialGradient><linearGradient id="rg" x1="0" y1="0" x2="1" y2="1"><stop offset="0" stop-color="#f0f0f0"/><stop offset="1" stop-color="#b5b5b5"/></linearGradient><linearGradient id="pg" x1="0" y1="0" x2="0" y2="1"><stop offset="0" stop-color="#f2f2f2"/><stop offset="1" stop-color="#a8a8a8"/></linearGradient></defs><rect x="484.5" y="53.5" width="21" height="18" fill="#cbcbcb" stroke="#9c9c9c"/><rect x="1114.5" y="53.5" width="21" height="18" fill="#cbcbcb" stroke="#9c9c9c"/><path d="M613.5 52.5v20" stroke="#9b9b9b"/><path d="M614.5 52.5v20" stroke="#e6e6e6"/><path d="M799.5 52.5v20" stroke="#9b9b9b"/><path d="M800.5 52.5v20" stroke="#e6e6e6"/><path d="M907.5 52.5v20" stroke="#9b9b9b"/><path d="M908.5 52.5v20" stroke="#e6e6e6"/><path d="M968.5 52.5v20" stroke="#9b9b9b"/><path d="M969.5 52.5v20" stroke="#e6e6e6"/><path d="M1104.5 52.5v20" stroke="#9b9b9b"/><path d="M1105.5 52.5v20" stroke="#e6e6e6"/><path d="M490.500 55v11.800l2.800-2.600 2.200 4.900 1.900-.9-2.200-4.700h3.800z" fill="#4a4a4a" stroke="#3a3a3a" stroke-width=".6" stroke-linejoin="round"/><path d="M516.500 56v10.500l2.500-2.300 2 4.300 1.500-.7-2-4.200h3.400z" fill="#f7f7f7" stroke="#555" stroke-width="1" stroke-linejoin="round"/><rect x="543.500" y="57.500" width="11" height="10" fill="none" stroke="#444" stroke-width="1.600" stroke-dasharray="2 1.500"/><path d="M539 56v10.500l7.500-5z" fill="#777" stroke="#666" stroke-width=".5"/><path d="M557 68v3h-3z" fill="#555"/><circle cx="572.500" cy="60.500" r="7.200" fill="url(#sph)" stroke="#9a9a9a" stroke-width=".6"/><ellipse cx="573.500" cy="62" rx="3.200" ry="7.800" fill="none" stroke="#8e8e8e" stroke-width="1" transform="rotate(-8 573.500 62)"/><path d="M566 64.500q7 3.500 13.500-1" fill="none" stroke="#8e8e8e"/><path d="M583 68v3h-3z" fill="#555"/><ellipse cx="599.500" cy="59.500" rx="7.500" ry="4" fill="none" stroke="#8a8a8a" stroke-width="1.300" transform="rotate(-12 599.500 59.500)"/><path d="M593.500 62q-2 1.500-.5 3t1.500 4.500" fill="none" stroke="#8a8a8a" stroke-width="1.100"/><circle cx="593.200" cy="63.500" r="1.300" fill="none" stroke="#8a8a8a"/><path d="M629 53.500l3.800 8.500-1.800 5.500h-4l-1.800-5.500z" fill="#ececec" stroke="#666" stroke-width="1"/><path d="M629 56v6" stroke="#666"/><circle cx="629" cy="62.800" r=".9" fill="#666"/><path d="M626.500 68.500h5v2h-5z" fill="#777"/><path d="M638 68v3h-3z" fill="#555"/><text x="648.300" y="67.800" font-family="Liberation Serif,serif" font-size="18.500" fill="#5a5a5a" style="position:static">T</text><path d="M674 56l13 12.500" stroke="#6b6b6b" stroke-width="1.300"/><rect x="700.500" y="56.500" width="13" height="10.500" fill="url(#rg)" stroke="#9a9a9a"/><path d="M701 67.800h13.500v-10.500" fill="none" stroke="#b9b9b9"/><path d="M716.500 68v3h-3z" fill="#555"/><path d="M726.0 69.5L729.6 68.2L740.6 57.1L738.4 54.9L727.3 65.9L726.0 69.5Z" fill="#ececec" stroke="#7a7a7a" stroke-width=".9" stroke-linejoin="round"/><path d="M739.2 58.5L737.0 56.3" stroke="#7a7a7a" stroke-width=".9"/><path d="M726.0 69.5L727.8 68.8L726.7 67.7Z" fill="#666"/><path d="M767.500 55l-9.500 9.500" stroke="#8a8a8a" stroke-width="1.800"/><path d="M758.800 63.300l1.800 1.800q-2.500 3.800-8.300 3.400 4-1.500 6.500-5.200z" fill="#8a8a8a" stroke="#6f6f6f" stroke-width=".6"/><path d="M769.500 68v3h-3z" fill="#555"/><path d="M780.5 69.0L784.1 67.7L795.1 57.2L792.9 54.8L781.9 65.4L780.5 69.0Z" fill="#ececec" stroke="#7a7a7a" stroke-width=".9" stroke-linejoin="round"/><path d="M793.7 58.5L791.4 56.2" stroke="#7a7a7a" stroke-width=".9"/><path d="M780.5 69.0L782.4 68.3L781.2 67.2Z" fill="#666"/><path d="M776 62.500a6.500 6.500 0 0 1 9-6.500M776.300 64.500q.8 3 3 4.300" fill="none" stroke="#6f6f6f" stroke-width="1.400" stroke-dasharray="1.200 1.600"/><path d="M809.500 65l9-8" stroke="#9a9a9a" stroke-width="3.600" stroke-linecap="round"/><circle cx="807.500" cy="64" r="1.700" fill="#f2f2f2" stroke="#9a9a9a"/><circle cx="810.200" cy="66.800" r="1.700" fill="#f2f2f2" stroke="#9a9a9a"/><circle cx="817.300" cy="55.800" r="1.700" fill="#f2f2f2" stroke="#9a9a9a"/><circle cx="820" cy="58.500" r="1.700" fill="#f2f2f2" stroke="#9a9a9a"/><path d="M809.500 65l9-8" stroke="#f2f2f2" stroke-width="2" stroke-linecap="round"/><path d="M826 68v3h-3z" fill="#555"/><g transform="translate(839 62.5) scale(1)"><path d="M-2-6.500l7.500 6-6.500 8-7.500-6z" fill="url(#pg)" stroke="#777" stroke-width="1" stroke-linejoin="round"/><path d="M-2.500-6q-1-3 1.500-3t2 4.500" fill="none" stroke="#777" stroke-width="1"/><path d="M5.500-.5q2.500 1.500 2.500 6.500l-2.300-.3q.3-3-1.700-4.500z" fill="#777"/></g><path d="M852 68v3h-3z" fill="#555"/><path d="M861 68.500l8.500-8.500" stroke="#8a8a8a" stroke-width="2.600" stroke-linecap="round"/><path d="M861 68.500l8.500-8.500" stroke="#efefef" stroke-width="1" stroke-linecap="round"/><path d="M868 57.500l5 5" stroke="#666" stroke-width="2.200"/><path d="M870.500 60l3.500-3.800" stroke="#555" stroke-width="3.400" stroke-linecap="round"/><path d="M890.500 58h10.500l-4.500 6h-10.500z" fill="#f3f3f3" stroke="#8a8a8a" stroke-linejoin="round"/><path d="M886 64v3.200h10.500v-3.200M896.500 67.200l4.500-6v-3.200" fill="#dedede" stroke="#8a8a8a" stroke-linejoin="round"/><path d="M918.500 70q-1.800-3.200-4.200-6.600-.9-1.900.6-2.400 1.300-.3 2.700 1.900l.9 1.300v-7.400q0-1.400 1.300-1.400t1.300 1.400v-1.800q0-1.400 1.300-1.400t1.300 1.400v.6q0-1.400 1.300-1.400t1.300 1.400v1.400q.1-1.300 1.300-1.200t1.200 1.500v7.500q0 3.200-1.600 5.200z" fill="#f6f6f6" stroke="#8a8a8a" stroke-width="1" stroke-linejoin="round"/><path d="M920.800 57v5M923.400 55.500v6.500M926 56.500v5.500" stroke="#a2a2a2" stroke-width=".8"/><circle cx="946.500" cy="60" r="5.200" fill="#e9e9e9" stroke="#8a8a8a" stroke-width="1.400"/><path d="M950.500 64l4.700 5" stroke="#8a8a8a" stroke-width="2.400" stroke-linecap="round"/><path d="M981.5 67.0L985.0 65.6L993.4 58.0L991.6 56.0L983.2 63.7L981.5 67.0Z" fill="#f2f2f2" stroke="#7a7a7a" stroke-width=".9" stroke-linejoin="round"/><path d="M991.9 59.3L990.1 57.4" stroke="#7a7a7a" stroke-width=".9"/><path d="M981.5 67.0L983.3 66.3L982.4 65.3Z" fill="#666"/><rect x="997.500" y="55.500" width="19" height="15" fill="#e6e6e6" stroke="#8a8a8a"/><path d="M997 70.500h20v-15" fill="none" stroke="#2e2e2e" stroke-width="1"/><g transform="translate(1029 61.5) scale(0.8)"><path d="M-2-6.500l7.500 6-6.500 8-7.500-6z" fill="url(#pg)" stroke="#777" stroke-width="1" stroke-linejoin="round"/><path d="M-2.500-6q-1-3 1.500-3t2 4.500" fill="none" stroke="#777" stroke-width="1"/><path d="M5.500-.5q2.500 1.500 2.500 6.500l-2.300-.3q.3-3-1.700-4.500z" fill="#777"/></g><rect x="1041.500" y="55.500" width="19" height="15" fill="#d7d7d7" stroke="#8a8a8a"/><path d="M1041 70.500h20v-15" fill="none" stroke="#2e2e2e" stroke-width="1"/><rect x="1071" y="61" width="6" height="6" fill="#f2f2f2" stroke="#aaa" stroke-width=".8"/><rect x="1067" y="57.500" width="6.500" height="6.500" fill="#6e6e6e"/><rect x="1082" y="57" width="5" height="5" fill="#707070"/><rect x="1082.500" y="64" width="4.500" height="4.500" fill="#f2f2f2" stroke="#aaa" stroke-width=".8"/><path d="M1089.500 59.500q4 .5 4 3.500t-4 3.500" fill="none" stroke="#777" stroke-width="1.300"/><path d="M1091.500 57l-3 2.500 3 2.500zM1091.500 64l-3 2.500 3 2.500z" fill="#666"/><path d="M1119 67v-7.500a5.500 5.500 0 0 1 11 0v7.500h-2.800v-7.500a2.700 2.700 0 0 0-5.400 0v7.500z" fill="#dcdcdc" stroke="#8a8a8a" stroke-width="1"/><path d="M1119 65h2.800M1127.200 65h2.800" stroke="#8a8a8a"/><path d="M1119.500 69.500h2.500M1127.500 69.500h2.500" stroke="#555" stroke-width="1.200" stroke-dasharray="1 .7"/><path d="M1141 60.500h6M1144.500 58.500l2.500 2-2.500 2z" stroke="#9a9a9a" fill="#9a9a9a" stroke-width="1"/><path d="M1157 53.500q-6-.5-6 4t5.500 5.500-1 7.500" fill="none" stroke="#9a9a9a" stroke-width="1.500"/><path d="M1168 60.500h6M1171.500 58.500l2.500 2-2.500 2z" stroke="#9a9a9a" fill="#9a9a9a" stroke-width="1"/><path d="M1182.500 53.500l-5 7 5.500 9" fill="none" stroke="#9a9a9a" stroke-width="1.500"/></svg><div class="sep" style="left:479px;top:82px;width:1117px;height:3px;"></div><div style="left:479px;top:85px;width:1117px;height:19px;background:linear-gradient(#9c9c9c,#a6a6a6 35%);border-bottom:1px solid #787878"></div><div style="left:479px;top:85px;width:221px;height:19px;background:linear-gradient(#9c9c9c,#a6a6a6 35%);border-right:1px solid #6f6f6f;border-bottom:1px solid #787878"></div><div style="left:700px;top:85px;width:111px;height:19px;background:linear-gradient(#cdcdcd,#d8d8d8);border-right:1px solid #6f6f6f"></div><div style="left:811px;top:85px;width:146px;height:19px;background:linear-gradient(#9c9c9c,#a6a6a6 35%);border-right:1px solid #6f6f6f;border-bottom:1px solid #787878"></div><div style="left:488.00px;top:87.19px;font-size:11px;line-height:16px;height:16px;white-space:pre;color:#1d1d1d;letter-spacing:0.218px;-webkit-text-stroke:.35px #1d1d1d;">GuideScaleform.fla : GuideScaleform</div><div style="left:709.00px;top:87.19px;font-size:11px;line-height:16px;height:16px;white-space:pre;color:#1d1d1d;letter-spacing:0.010px;-webkit-text-stroke:.35px #1d1d1d;">BaseScriptUI.as</div><div style="left:820.00px;top:87.19px;font-size:11px;line-height:16px;height:16px;white-space:pre;color:#1d1d1d;letter-spacing:-0.310px;-webkit-text-stroke:.35px #1d1d1d;">GUIDESCALEFORM.as</div><svg style="left:685px;top:92px" width="6" height="6" viewBox="0 0 6 6"><path d="M.5 .5l5 5M5.500 .5l-5 5" stroke="#222" stroke-width="1.300"/></svg><svg style="left:796px;top:92px" width="6" height="6" viewBox="0 0 6 6"><path d="M.5 .5l5 5M5.500 .5l-5 5" stroke="#222" stroke-width="1.300"/></svg><svg style="left:941px;top:92px" width="6" height="6" viewBox="0 0 6 6"><path d="M.5 .5l5 5M5.500 .5l-5 5" stroke="#222" stroke-width="1.300"/></svg><div style="left:479px;top:104px;width:10px;height:749px;background:#d6d6d6"></div><div style="left:489px;top:104px;width:1107px;height:24px;background:linear-gradient(#e4e4e4,#d9d9d9 50%,#c4c4c4)"></div><svg style="left:489px;top:104px" width="330" height="24" viewBox="489 104 330 24"><path d="M513.5 108v17" stroke="#cfcfcf"/><path d="M514.5 108v17" stroke="#e4e4e4"/><path d="M539.5 108v17" stroke="#cfcfcf"/><path d="M540.5 108v17" stroke="#e4e4e4"/><path d="M587.5 108v17" stroke="#cfcfcf"/><path d="M588.5 108v17" stroke="#e4e4e4"/><path d="M638.5 108v17" stroke="#cfcfcf"/><path d="M639.5 108v17" stroke="#e4e4e4"/><path d="M708.5 108v17" stroke="#cfcfcf"/><path d="M709.5 108v17" stroke="#e4e4e4"/><path d="M778.5 108v17" stroke="#cfcfcf"/><path d="M779.5 108v17" stroke="#e4e4e4"/><!--plus--><path d="M498 109.500h3.500v3.700h3.700v3.500h-3.700v3.700h-3.500v-3.700h-3.700v-3.500h3.700z" fill="#bfe2ff" stroke="#1e4fae" stroke-width="1.300" stroke-linejoin="round"/><path d="M503.500 119.500h5l-2.500 2.800z" fill="#111"/><!--mag--><path d="M524 118.500l-5 4.700" stroke="#7a5a10" stroke-width="2.600" stroke-linecap="round"/><path d="M524 118.500l-5 4.700" stroke="#f3c948" stroke-width="1.200" stroke-linecap="round"/><circle cx="527.700" cy="114.200" r="5.300" fill="#eaf3ff" stroke="#8a8a8a" stroke-width="1.200"/><text x="524.600" y="117.600" font-family="Liberation Sans,sans-serif" font-size="8.500" font-weight="bold" fill="#2a3fd0" style="position:static">A</text><!--check--><path d="M544.500 114.800l2.200-1.800 4.300 3.600 6.800-6.200 1 1-7.600 9.400z" fill="#1e88f0" stroke="#1760c0" stroke-width=".6" stroke-linejoin="round"/><!--fmt--><rect x="566.500" y="110.500" width="14" height="4" fill="#fff"/><path d="M567 109.7H578" stroke="#111" stroke-width="1.300"/><path d="M570 112.3H579" stroke="#111" stroke-width="1.300"/><path d="M570 114.9H577" stroke="#111" stroke-width="1.300"/><path d="M567 117.5H577" stroke="#111" stroke-width="1.300"/><path d="M567 120.1H577" stroke="#111" stroke-width="1.300"/><path d="M567 122.7H577" stroke="#111" stroke-width="1.300"/><!--cmt--><path d="M596 109q-3.500 6.500 0 13" fill="none" stroke="#222" stroke-width="1.200"/><path d="M597.500 111.500h9.500v6.500h-3l-1.500 2.300v-2.300h-5z" fill="#f7f0a0" stroke="#444" stroke-width="1"/><path d="M599.500 113.700h5.500M599.500 115.700h5.500" stroke="#9a8f3a" stroke-width=".8"/><path d="M597.500 122.500h8" stroke="#222" stroke-width="1.300" stroke-dasharray="1.500 1.500"/><!--hint--><path d="M619 113q-1.500 6 .5 7.500t5-3.500 4.500-6-1.500-2.500-4 3.500-1.500 7.500" fill="none" stroke="#222" stroke-width="1.200"/><circle cx="618.500" cy="111" r="1.900" fill="#f7e36a" stroke="#333" stroke-width=".9"/><path d="M627 121h5l-2.500 2.800z" fill="#111"/><!--c1--><path d="M644 111.5H649.5M658 111.5H652.5" stroke="#1c5fd0" stroke-width="1.200"/><path d="M650.7 111.5l-3.200-2.400v4.800zM651.3 111.5l3.200-2.400v4.800z" fill="#1c5fd0"/><text x="643.500" y="123.300" font-family="Liberation Mono,monospace" font-size="10.500" fill="#111" style="position:static;letter-spacing:0px">{}</text><!--c2--><path d="M666 111.5H671.5M680 111.5H674.5" stroke="#1c5fd0" stroke-width="1.200"/><path d="M672.7 111.5l-3.200-2.400v4.800zM673.3 111.5l3.200-2.400v4.800z" fill="#1c5fd0"/><rect x="668.300" y="116.800" width="9.500" height="5.800" fill="none" stroke="#111" stroke-width="1.300" stroke-dasharray="1.600 1"/><!--c3--><path d="M690 111.5H700" stroke="#1c5fd0" stroke-width="1.200"/><path d="M688 111.5l3.200-2.400v4.800zM702 111.5l-3.200-2.400v4.800z" fill="#1c5fd0"/><path d="M695 116v7.600M691.700 117.900l6.600 3.800M698.300 117.900l-6.600 3.800" stroke="#111" stroke-width="1.400"/><!--rest--><path d="M715.6 109.500h8.500q2.600 0 2.600 2.600v4.400q0 2.600-2.600 2.600h-5.500l-3.300 3 .8-3h-.5q-2.600 0-2.600-2.600v-4.400q0-2.600 2.600-2.600z" fill="#fff" stroke="#2e5fd6" stroke-width="1.300" stroke-linejoin="round"/><path d="M718.500 117l1.600-5.500" stroke="#2e5fd6" stroke-width="1.200"/><circle cx="722.300" cy="112.800" r="1" fill="#2e5fd6"/><path d="M737.6 109.500h8.500q2.600 0 2.600 2.600v4.400q0 2.600-2.600 2.600h-5.500l-3.300 3 .8-3h-.5q-2.600 0-2.600-2.600v-4.400q0-2.600 2.600-2.600z" fill="#fff" stroke="#2e5fd6" stroke-width="1.300" stroke-linejoin="round"/><path d="M740 117l1.600-5.500M743 117l1.600-5.500" stroke="#2e5fd6" stroke-width="1.200"/><path d="M759.6 109.500h8.500q2.600 0 2.600 2.600v4.400q0 2.600-2.600 2.600h-5.500l-3.300 3 .8-3h-.5q-2.600 0-2.600-2.600v-4.400q0-2.600 2.600-2.600z" fill="#fff" stroke="#2e5fd6" stroke-width="1.300" stroke-linejoin="round"/><path d="M766 108.500l5.500 5.500M771.500 108.500l-5.500 5.500" stroke="#f0561e" stroke-width="1.800"/><rect x="784.500" y="109.500" width="13" height="13" fill="#fff" stroke="#9a90d0" stroke-width="1"/><path d="M785 111h12" stroke="#7fe0f0" stroke-width="1.600"/><path d="M790.500 109.500v13" stroke="#9a90d0"/><path d="M789.500 117.500h5" stroke="#0f6f78" stroke-width="1.400"/><path d="M796.300 117.500l-2.800-2.300v4.600z" fill="#0f6f78"/></svg><div style="left:1357.00px;top:108.84px;font-size:12px;line-height:16px;height:16px;white-space:pre;color:#1a1a1a;letter-spacing:0.257px;">Obiettivo:</div><div style="left:1417px;top:107px;width:148px;height:21px;background:#fff"></div><div style="left:1421.00px;top:109.84px;font-size:12px;line-height:16px;height:16px;white-space:pre;color:#111;letter-spacing:-0.238px;">GuideScaleform.fla</div><svg style="left:1552.5px;top:115.5px" width="9" height="6" viewBox="0 0 9 6"><path d="M.5 .5l4 4 4-4" fill="none" stroke="#505050" stroke-width=".9"/></svg><svg style="left:1575px;top:109px" width="14" height="14" viewBox="0 0 14 14"><circle cx="7" cy="7" r="6" fill="#fafafa" stroke="#8a8a8a" stroke-width="1.200"/><text x="4.300" y="10.500" font-size="10" font-weight="bold" font-family="Liberation Serif,serif" fill="#333" style="position:static">?</text></svg><div style="left:480px;top:463px;width:7px;height:32px;background:#d6d6d6;border:1px solid #808080;box-shadow:inset 1px -1px 0 #fff"></div><svg style="left:483px;top:476px" width="3" height="5" viewBox="0 0 3 5"><path d="M0 0V5L3 2.5Z" fill="#1a1a5c"/></svg><div style="left:489px;top:128px;width:49px;height:692px;background:#0078d7"></div><div style="left:502px;top:128px;width:1px;height:692px;background:#0066bb"></div><div style="left:538px;top:128px;width:1042px;height:692px;background:#fff"></div><div style="left:1580px;top:128px;width:16px;height:692px;background:#f0f0f0"></div><svg style="left:1583.5px;top:134.5px" width="8" height="5" viewBox="0 0 8 5"><path d="M0 5H8L4 0Z" fill="#a5a5a5"/></svg><svg style="left:1583.5px;top:809px" width="8" height="5" viewBox="0 0 8 5"><path d="M0 0H8L4 5Z" fill="#a5a5a5"/></svg><div style="left:489px;top:820px;width:1091px;height:17px;background:#f0f0f0"></div><div style="left:1580px;top:820px;width:16px;height:17px;background:#d9d9d9"></div><svg style="left:494px;top:824.5px" width="5" height="8" viewBox="0 0 5 8"><path d="M5 0V8L0 4Z" fill="#a5a5a5"/></svg><svg style="left:1568.5px;top:824.5px" width="5" height="8" viewBox="0 0 5 8"><path d="M0 0V8L5 4Z" fill="#a5a5a5"/></svg><div style="left:514.50px;top:129.02px;font-size:11.5px;line-height:16px;height:16px;white-space:pre;color:#fff;">1</div><div style="left:542.40px;top:128.94px;font-size:11.5px;line-height:16px;height:16px;white-space:pre;color:#000;font-family:'Liberation Mono',monospace;letter-spacing:1.1px;"><span style="color:#9400a3">class</span><span style="color:#000"> com.rockstargames.gtav.levelDesign.BaseScriptUI </span><span style="color:#9400a3">extends</span><span style="color:#000"> </span><span style="color:#9400a3">MovieClip</span></div><div style="left:514.50px;top:146.02px;font-size:11.5px;line-height:16px;height:16px;white-space:pre;color:#fff;">2</div><div style="left:542.40px;top:145.94px;font-size:11.5px;line-height:16px;height:16px;white-space:pre;color:#000;font-family:'Liberation Mono',monospace;letter-spacing:1.1px;"><span style="color:#000">{</span></div><div style="left:514.50px;top:163.02px;font-size:11.5px;line-height:16px;height:16px;white-space:pre;color:#fff;">3</div><div style="left:542.40px;top:162.94px;font-size:11.5px;line-height:16px;height:16px;white-space:pre;color:#000;font-family:'Liberation Mono',monospace;letter-spacing:1.1px;"><span style="color:#000">    </span><span style="color:#9400a3">var</span><span style="color:#000"> TIMELINE;</span></div><div style="left:514.50px;top:180.02px;font-size:11.5px;line-height:16px;height:16px;white-space:pre;color:#fff;">4</div><div style="left:542.40px;top:179.94px;font-size:11.5px;line-height:16px;height:16px;white-space:pre;color:#000;font-family:'Liberation Mono',monospace;letter-spacing:1.1px;"><span style="color:#000">    </span><span style="color:#9400a3">var</span><span style="color:#000"> CONTENT;</span></div><div style="left:514.50px;top:197.02px;font-size:11.5px;line-height:16px;height:16px;white-space:pre;color:#fff;">5</div><div style="left:542.40px;top:196.94px;font-size:11.5px;line-height:16px;height:16px;white-space:pre;color:#000;font-family:'Liberation Mono',monospace;letter-spacing:1.1px;"><span style="color:#000">    </span><span style="color:#9400a3">var</span><span style="color:#000"> BOUNDING_BOX;</span></div><div style="left:514.50px;top:214.02px;font-size:11.5px;line-height:16px;height:16px;white-space:pre;color:#fff;">6</div><div style="left:514.50px;top:231.02px;font-size:11.5px;line-height:16px;height:16px;white-space:pre;color:#fff;">7</div><div style="left:542.40px;top:230.94px;font-size:11.5px;line-height:16px;height:16px;white-space:pre;color:#000;font-family:'Liberation Mono',monospace;letter-spacing:1.1px;"><span style="color:#000">    </span><span style="color:#9400a3">function</span><span style="color:#000"> BaseScriptUI()</span></div><div style="left:514.50px;top:248.02px;font-size:11.5px;line-height:16px;height:16px;white-space:pre;color:#fff;">8</div><div style="left:542.40px;top:247.94px;font-size:11.5px;line-height:16px;height:16px;white-space:pre;color:#000;font-family:'Liberation Mono',monospace;letter-spacing:1.1px;"><span style="color:#000">    {</span></div><div style="left:514.50px;top:265.02px;font-size:11.5px;line-height:16px;height:16px;white-space:pre;color:#fff;">9</div><div style="left:542.40px;top:264.94px;font-size:11.5px;line-height:16px;height:16px;white-space:pre;color:#000;font-family:'Liberation Mono',monospace;letter-spacing:1.1px;"><span style="color:#000">        </span><span style="color:#0a2be0">super</span><span style="color:#000">();</span></div><div style="left:507.90px;top:282.02px;font-size:11.5px;line-height:16px;height:16px;white-space:pre;color:#fff;letter-spacing:-0.192px;">10</div><div style="left:542.40px;top:281.94px;font-size:11.5px;line-height:16px;height:16px;white-space:pre;color:#000;font-family:'Liberation Mono',monospace;letter-spacing:1.1px;"><span style="color:#000">    }</span></div><div style="left:507.90px;top:299.02px;font-size:11.5px;line-height:16px;height:16px;white-space:pre;color:#fff;letter-spacing:0.662px;">11</div><div style="left:542.40px;top:298.94px;font-size:11.5px;line-height:16px;height:16px;white-space:pre;color:#000;font-family:'Liberation Mono',monospace;letter-spacing:1.1px;"><span style="color:#000">    </span><span style="color:#9400a3">function</span><span style="color:#000"> INITIALISE(mc)</span></div><div style="left:507.90px;top:316.02px;font-size:11.5px;line-height:16px;height:16px;white-space:pre;color:#fff;letter-spacing:-0.192px;">12</div><div style="left:542.40px;top:315.94px;font-size:11.5px;line-height:16px;height:16px;white-space:pre;color:#000;font-family:'Liberation Mono',monospace;letter-spacing:1.1px;"><span style="color:#000">    {</span></div><div style="left:507.90px;top:333.02px;font-size:11.5px;line-height:16px;height:16px;white-space:pre;color:#fff;letter-spacing:-0.192px;">13</div><div style="left:542.40px;top:332.94px;font-size:11.5px;line-height:16px;height:16px;white-space:pre;color:#000;font-family:'Liberation Mono',monospace;letter-spacing:1.1px;"><span style="color:#000">        </span><span style="color:#0a2be0">this</span><span style="color:#000">.TIMELINE = mc;</span></div><div style="left:507.90px;top:350.02px;font-size:11.5px;line-height:16px;height:16px;white-space:pre;color:#fff;letter-spacing:-0.192px;">14</div><div style="left:542.40px;top:349.94px;font-size:11.5px;line-height:16px;height:16px;white-space:pre;color:#000;font-family:'Liberation Mono',monospace;letter-spacing:1.1px;"><span style="color:#000">        </span><span style="color:#0a2be0">this</span><span style="color:#000">.CONTENT = </span><span style="color:#0a2be0">this</span><span style="color:#000">.TIMELINE.</span><span style="color:#0a2be0">attachMovie</span><span style="color:#000">(</span><span style="color:#00a000">&quot;CONTENT&quot;</span><span style="color:#000">, </span><span style="color:#00a000">&quot;CONTENT&quot;</span><span style="color:#000">, </span><span style="color:#0a2be0">this</span><span style="color:#000">.TIMELINE.</span><span style="color:#0a2be0">getNextHighestDepth</span><span style="color:#000">());</span></div><div style="left:507.90px;top:367.02px;font-size:11.5px;line-height:16px;height:16px;white-space:pre;color:#fff;letter-spacing:-0.192px;">15</div><div style="left:542.40px;top:366.94px;font-size:11.5px;line-height:16px;height:16px;white-space:pre;color:#000;font-family:'Liberation Mono',monospace;letter-spacing:1.1px;"><span style="color:#000">        </span><span style="color:#0a2be0">this</span><span style="color:#000">.BOUNDING_BOX = </span><span style="color:#0a2be0">this</span><span style="color:#000">.TIMELINE.</span><span style="color:#0a2be0">attachMovie</span><span style="color:#000">(</span><span style="color:#00a000">&quot;BOUNDING_BOX&quot;</span><span style="color:#000">, </span><span style="color:#00a000">&quot;BOUNDING_BOX&quot;</span><span style="color:#000">, </span><span style="color:#0a2be0">this</span><span style="color:#000">.TIMELINE.</span><span style="color:#0a2be0">getNextHighestDepth</span><span style="color:#000">());</span></div><div style="left:507.90px;top:384.02px;font-size:11.5px;line-height:16px;height:16px;white-space:pre;color:#fff;letter-spacing:-0.192px;">16</div><div style="left:542.40px;top:383.94px;font-size:11.5px;line-height:16px;height:16px;white-space:pre;color:#000;font-family:'Liberation Mono',monospace;letter-spacing:1.1px;"><span style="color:#000">        </span><span style="color:#0a2be0">this</span><span style="color:#000">.BOUNDING_BOX.</span><span style="color:#0a2be0">_visible</span><span style="color:#000"> = </span><span style="color:#0a2be0">false</span><span style="color:#000">;</span></div><div style="left:507.90px;top:401.02px;font-size:11.5px;line-height:16px;height:16px;white-space:pre;color:#fff;letter-spacing:-0.192px;">17</div><div style="left:542.40px;top:400.94px;font-size:11.5px;line-height:16px;height:16px;white-space:pre;color:#000;font-family:'Liberation Mono',monospace;letter-spacing:1.1px;"><span style="color:#000">    }</span></div><div style="left:507.90px;top:418.02px;font-size:11.5px;line-height:16px;height:16px;white-space:pre;color:#fff;letter-spacing:-0.192px;">18</div><div style="left:542.40px;top:417.94px;font-size:11.5px;line-height:16px;height:16px;white-space:pre;color:#000;font-family:'Liberation Mono',monospace;letter-spacing:1.1px;"><span style="color:#000">}</span></div><div style="left:549px;top:418px;width:2px;height:15px;background:#000"></div><div style="left:489px;top:837px;width:1107px;height:16px;background:#d6d6d6"></div><div style="left:497.00px;top:837.52px;font-size:11.5px;line-height:16px;height:16px;white-space:pre;color:#111;letter-spacing:0.303px;">Riga 18 di 18, colonna 2</div><div class="sep" style="left:479px;top:853px;width:1117px;height:3px;"></div><div class="tabbar" style="left:479px;top:856px;width:1117px;height:17px;"></div><div class="tab" style="left:479px;top:856px;width:118px;height:17px;"></div><div class="tabi" style="left:597px;top:856px;width:48px;height:17px;"></div><div class="tabi" style="left:645px;top:856px;width:90px;height:17px;"></div><div style="left:486.00px;top:856.53px;font-size:10px;line-height:16px;height:16px;white-space:pre;color:#1a1a1a;letter-spacing:-0.091px;font-weight:bold;">Errori del compilatore</div><div style="left:603.00px;top:856.53px;font-size:10px;line-height:16px;height:16px;white-space:pre;color:#1a1a1a;letter-spacing:0.247px;font-weight:bold;">Output</div><div style="left:652.00px;top:856.53px;font-size:10px;line-height:16px;height:16px;white-space:pre;color:#1a1a1a;letter-spacing:-0.192px;font-weight:bold;">Linea temporale</div><svg style="left:1577px;top:861px" width="14" height="9" viewBox="0 0 14 9"><path d="M0 1.500h5.400l-2.700 3.200z" fill="#333"/><path d="M6 1.500h8M6 3.500h8M6 5.500h8M6 7.500h8" stroke="#e2e2e2" stroke-width="1" opacity=".55"/><path d="M6 .5h8M6 2.500h8M6 4.500h8M6 6.500h8" stroke="#3a3a3a" stroke-width="1"/></svg><div style="left:479px;top:873px;width:1117px;height:158px;background:#d6d6d6"></div><div style="left:1496px;top:875px;width:1px;height:17px;background:#b4b4b4"></div><div style="left:1523px;top:875px;width:1px;height:17px;background:#b4b4b4"></div><div style="left:1569px;top:875px;width:1px;height:17px;background:#b4b4b4"></div><svg style="left:1502px;top:877px" width="13" height="13" viewBox="0 0 13 13"><path d="M6.500 .5l6 6h-3.500v6h-5v-6h-3.500z" fill="#c9daf2" stroke="#6e88ad" stroke-width="1" stroke-linejoin="round"/></svg><svg style="left:1528px;top:877px" width="13" height="13" viewBox="0 0 13 13"><path d="M.5 6.500l6-6v3.500h6v5h-6v3.500z" fill="#c9daf2" stroke="#6e88ad" stroke-width="1" stroke-linejoin="round"/></svg><svg style="left:1548px;top:877px" width="13" height="13" viewBox="0 0 13 13"><path d="M12.500 6.500l-6-6v3.500h-6v5h6v3.500z" fill="#c9daf2" stroke="#6e88ad" stroke-width="1" stroke-linejoin="round"/></svg><svg style="left:1577px;top:877px" width="14" height="13" viewBox="0 0 14 13"><path d="M1 1l12 11M12.500 .5L2 12.500" stroke="#d9534f" stroke-width="2" stroke-linecap="round"/></svg><div style="left:481px;top:895px;width:1114px;height:118px;background:#dfdfdf;border:1px solid #777"></div><div class="hd" style="left:482px;top:896px;width:1112px;height:19px;border-top:none"></div><div style="left:485.00px;top:896.52px;font-size:11.5px;line-height:16px;height:16px;white-space:pre;color:#1a1a1a;letter-spacing:-0.108px;">Posizione</div><div style="left:685px;top:899px;width:1px;height:13px;background:#444"></div><div style="left:690.00px;top:896.52px;font-size:11.5px;line-height:16px;height:16px;white-space:pre;color:#1a1a1a;letter-spacing:-0.108px;">Descrizione</div><div style="left:1584px;top:899px;width:1px;height:13px;background:#444"></div><svg style="left:485px;top:1016px" width="14" height="14" viewBox="0 0 14 14"><circle cx="7" cy="7" r="6" fill="#e26666" stroke="#b5b5b5" stroke-width="1.200"/></svg><div style="left:505.00px;top:1014.19px;font-size:11px;line-height:16px;height:16px;white-space:pre;color:#1a1a1a;letter-spacing:0.220px;">0 errore/i</div><svg style="left:564px;top:1015px" width="17" height="15" viewBox="0 0 17 15"><path d="M8.500 1l7.500 13h-15z" fill="#f7e3a1" stroke="#d6a93f" stroke-linejoin="round"/><path d="M8.500 5v5M8.500 11.300v1.400" stroke="#7a5a10" stroke-width="1.400"/></svg><div style="left:586.00px;top:1014.19px;font-size:11px;line-height:16px;height:16px;white-space:pre;color:#1a1a1a;letter-spacing:0.350px;">0 avviso/i</div><div class="cbar" style="left:1599px;top:30px;width:329px;height:13px;"></div><svg style="left:1916px;top:34px" width="8" height="6" viewBox="0 0 8 6"><path d="M0 0v6l3.500-3zM4 0v6l3.500-3z" fill="#2e2e2e"/></svg><div class="tabbar" style="left:1599px;top:43px;width:329px;height:17px;"></div><div class="tab" style="left:1599px;top:43px;width:59px;height:17px;"></div><div style="left:1606.00px;top:43.53px;font-size:10px;line-height:16px;height:16px;white-space:pre;color:#1a1a1a;letter-spacing:-0.113px;font-weight:bold;">Proprietà</div><svg style="left:1908px;top:48px" width="14" height="9" viewBox="0 0 14 9"><path d="M0 1.500h5.400l-2.700 3.200z" fill="#333"/><path d="M6 1.500h8M6 3.500h8M6 5.500h8M6 7.500h8" stroke="#e2e2e2" stroke-width="1" opacity=".55"/><path d="M6 .5h8M6 2.500h8M6 4.500h8M6 6.500h8" stroke="#3a3a3a" stroke-width="1"/></svg><div style="left:1599px;top:60px;width:329px;height:971px;background:#d6d6d6"></div><div style="left:1618px;top:74px;width:36px;height:36px;background:#ebebeb;border-left:1px solid #767676;border-top:1px solid #767676"></div><div style="left:1627.50px;top:84.72px;font-size:21px;line-height:16px;height:16px;white-space:pre;color:#b0b0b0;transform:scaleX(0.8574);transform-origin:0 0;font-weight:bold;-webkit-text-stroke:.5px #b0b0b0;">Fl</div><div style="left:1672.00px;top:69.19px;font-size:11px;line-height:16px;height:16px;white-space:pre;color:#666;letter-spacing:0.094px;">Documento</div><div style="left:1672.00px;top:98.19px;font-size:11px;line-height:16px;height:16px;white-space:pre;color:#666;letter-spacing:0.086px;">GuideScaleform.fla</div><div style="left:1599px;top:123px;width:329px;height:1px;background:#bdbdbd"></div><div class="sec" style="left:1599px;top:124px;width:329px;height:17px;"></div><svg style="left:1604px;top:129px" width="10" height="7" viewBox="0 0 10 7"><path d="M.6 .6h8.800l-4.400 5.600z" fill="#ddd" stroke="#777" stroke-width="1"/></svg><div style="left:1619.00px;top:124.36px;font-size:10.5px;line-height:16px;height:16px;white-space:pre;color:#595959;letter-spacing:-0.321px;font-weight:bold;">PUBBLICA</div><div style="left:1632.00px;top:149.19px;font-size:11px;line-height:16px;height:16px;white-space:pre;color:#666;letter-spacing:0.395px;">Profilo:</div><div style="left:1675.00px;top:149.19px;font-size:11px;line-height:16px;height:16px;white-space:pre;color:#666;letter-spacing:0.358px;">Default</div><div class="btn" style="left:1676px;top:168px;width:182px;height:18px;border-color:#8f8f8f"></div><div style="left:1683.00px;top:168.19px;font-size:11px;line-height:16px;height:16px;white-space:pre;color:#666;letter-spacing:0.327px;">Impostazioni di pubblicazione...</div><div style="left:1599px;top:192px;width:329px;height:1px;background:#b3b3b3"></div><div style="left:1600.00px;top:199.19px;font-size:11px;line-height:16px;height:16px;white-space:pre;color:#666;letter-spacing:0.196px;">Destinazione:</div><div class="combo" style="left:1676px;top:199px;width:144px;height:17px;"></div><div style="left:1683.00px;top:199.19px;font-size:11px;line-height:16px;height:16px;white-space:pre;color:#666;letter-spacing:-0.101px;">Flash Player 8</div><div style="left:1801px;top:202px;width:1px;height:11px;background:#666"></div><svg style="left:1807px;top:206px" width="7" height="4" viewBox="0 0 7 4"><path d="M0 0H7L3.5 4Z" fill="#333"/></svg><div style="left:1637.00px;top:228.19px;font-size:11px;line-height:16px;height:16px;white-space:pre;color:#666;letter-spacing:0.138px;">Script:</div><div class="combo" style="left:1676px;top:228px;width:144px;height:17px;"></div><div style="left:1683.00px;top:228.19px;font-size:11px;line-height:16px;height:16px;white-space:pre;color:#666;letter-spacing:0.064px;">ActionScript 2.0</div><div style="left:1801px;top:231px;width:1px;height:11px;background:#666"></div><svg style="left:1807px;top:235px" width="7" height="4" viewBox="0 0 7 4"><path d="M0 0H7L3.5 4Z" fill="#333"/></svg><svg style="left:1829px;top:230px" width="14" height="14" viewBox="0 0 14 14"><path d="M2.2 1.2a3.6 3.6 0 0 1 5.3 3.9l5.2 5.4a1.5 1.5 0 0 1-2.1 2.1L5.3 7.3A3.6 3.6 0 0 1 .9 2.6l2.3 2.2 1.9-.4.5-1.9z" fill="#4a4a4a"/></svg><div style="left:1599px;top:253px;width:329px;height:1px;background:#b3b3b3"></div><div style="left:1632.00px;top:262.19px;font-size:11px;line-height:16px;height:16px;white-space:pre;color:#666;letter-spacing:0.053px;">Classe:</div><div style="left:1825px;top:259px;width:24px;height:25px;background:#dcdcdc"></div><svg style="left:1829px;top:263px" width="16" height="16" viewBox="0 0 16 16"><path d="M2 14l1-4 8.500-8.500 3 3L6 13z" fill="#e9e9e9" stroke="#9b9b9b" stroke-width="1"/><path d="M2 14l1-4 3 3z" fill="#9b9b9b"/><path d="M10 3l3 3" stroke="#9b9b9b"/></svg><div style="left:1599px;top:291px;width:329px;height:1px;background:#bdbdbd"></div><div class="sec" style="left:1599px;top:292px;width:329px;height:17px;"></div><svg style="left:1604px;top:297px" width="10" height="7" viewBox="0 0 10 7"><path d="M.6 .6h8.800l-4.400 5.600z" fill="#ddd" stroke="#777" stroke-width="1"/></svg><div style="left:1619.00px;top:292.36px;font-size:10.5px;line-height:16px;height:16px;white-space:pre;color:#595959;letter-spacing:-0.282px;font-weight:bold;">PROPRIETÀ</div><div style="left:1645.00px;top:317.19px;font-size:11px;line-height:16px;height:16px;white-space:pre;color:#666;letter-spacing:-1.150px;">FPS:</div><div style="left:1680.00px;top:317.19px;font-size:11px;line-height:16px;height:16px;white-space:pre;color:#666;letter-spacing:-0.382px;border-bottom:1px dotted #666;height:15px;">30,00</div><div style="left:1599px;top:340px;width:329px;height:1px;background:#b3b3b3"></div><div style="left:1603.00px;top:345.19px;font-size:11px;line-height:16px;height:16px;white-space:pre;color:#666;letter-spacing:0.186px;">Dimensione:</div><div style="left:1680.00px;top:345.19px;font-size:11px;line-height:16px;height:16px;white-space:pre;color:#666;letter-spacing:-0.157px;border-bottom:1px dotted #666;height:15px;">1280</div><div style="left:1720.00px;top:345.19px;font-size:11px;line-height:16px;height:16px;white-space:pre;color:#666;">x</div><div style="left:1744.00px;top:345.19px;font-size:11px;line-height:16px;height:16px;white-space:pre;color:#666;letter-spacing:-0.177px;border-bottom:1px dotted #666;height:15px;">720</div><div style="left:1790.00px;top:345.19px;font-size:11px;line-height:16px;height:16px;white-space:pre;color:#666;letter-spacing:0.382px;">px</div><svg style="left:1892px;top:346px" width="14" height="14" viewBox="0 0 14 14"><path d="M2.2 1.2a3.6 3.6 0 0 1 5.3 3.9l5.2 5.4a1.5 1.5 0 0 1-2.1 2.1L5.3 7.3A3.6 3.6 0 0 1 .9 2.6l2.3 2.2 1.9-.4.5-1.9z" fill="#4a4a4a"/></svg><div style="left:1599px;top:366px;width:329px;height:1px;background:#b3b3b3"></div><div style="left:1634.00px;top:374.19px;font-size:11px;line-height:16px;height:16px;white-space:pre;color:#666;letter-spacing:0.040px;">Stage:</div><div style="left:1678px;top:375px;width:30px;height:14px;background:#ececec;border:1px solid #5a5a5a"></div><div style="left:1599px;top:404px;width:329px;height:1px;background:#bdbdbd"></div><div class="sec" style="left:1599px;top:405px;width:329px;height:17px;"></div><svg style="left:1604px;top:410px" width="10" height="7" viewBox="0 0 10 7"><path d="M.6 .6h8.800l-4.400 5.600z" fill="#ddd" stroke="#777" stroke-width="1"/></svg><div style="left:1619.00px;top:405.36px;font-size:10.5px;line-height:16px;height:16px;white-space:pre;color:#595959;letter-spacing:-0.275px;font-weight:bold;">CRONOLOGIA SWF</div><div class="btn" style="left:1649px;top:426px;width:63px;height:18px;border-color:#8f8f8f"></div><div style="left:1658.00px;top:426.19px;font-size:11px;line-height:16px;height:16px;white-space:pre;color:#666;letter-spacing:0.291px;">Registro</div><div class="btn" style="left:1790px;top:426px;width:61px;height:18px;border-color:#8f8f8f"></div><div style="left:1799.00px;top:426.19px;font-size:11px;line-height:16px;height:16px;white-space:pre;color:#666;letter-spacing:-0.115px;">Cancella</div><div style="left:1636.00px;top:450.19px;font-size:11px;line-height:16px;height:16px;white-space:pre;color:#666;letter-spacing:-0.322px;">325.5 KB</div><div style="left:1689.00px;top:450.19px;font-size:11px;line-height:16px;height:16px;white-space:pre;color:#666;letter-spacing:0.105px;">08/06/2022</div><div style="left:1779.00px;top:450.19px;font-size:11px;line-height:16px;height:16px;white-space:pre;color:#666;letter-spacing:-0.132px;">18:29</div><div style="left:1636.00px;top:470.19px;font-size:11px;line-height:16px;height:16px;white-space:pre;color:#666;letter-spacing:-0.322px;">325.4 KB</div><div style="left:1689.00px;top:470.19px;font-size:11px;line-height:16px;height:16px;white-space:pre;color:#666;letter-spacing:0.105px;">08/06/2022</div><div style="left:1779.00px;top:470.19px;font-size:11px;line-height:16px;height:16px;white-space:pre;color:#666;letter-spacing:-0.132px;">18:27</div><div style="left:1636.00px;top:490.19px;font-size:11px;line-height:16px;height:16px;white-space:pre;color:#666;letter-spacing:-0.322px;">325.0 KB</div><div style="left:1689.00px;top:490.19px;font-size:11px;line-height:16px;height:16px;white-space:pre;color:#666;letter-spacing:0.105px;">08/06/2022</div><div style="left:1779.00px;top:490.19px;font-size:11px;line-height:16px;height:16px;white-space:pre;color:#666;letter-spacing:-0.132px;">18:26</div></div></body></html>
